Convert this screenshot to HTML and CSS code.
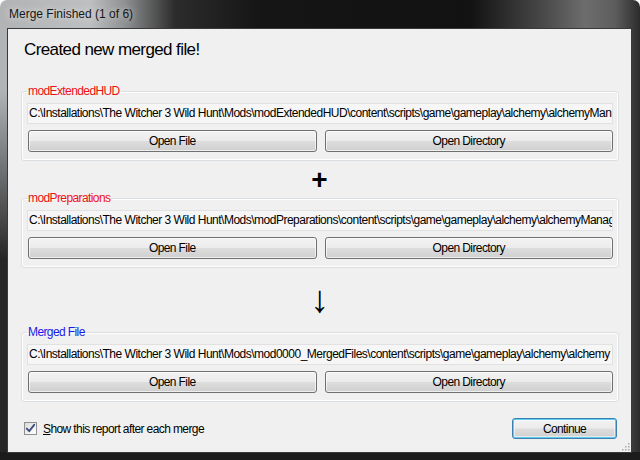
FILE: index.html
```html
<!DOCTYPE html>
<html>
<head>
<meta charset="utf-8">
<title>Merge Finished</title>
<link rel="stylesheet" href="styles.css">
</head>
<body>
<div class="window">
  <div class="titlebar">Merge Finished (1 of 6)</div>
  <div class="client">
    <h1 class="heading">Created new merged file!</h1>

    <fieldset class="group">
      <legend class="legend legend-red">modExtendedHUD</legend>
      <div class="path">C:\Installations\The Witcher 3 Wild Hunt\Mods\modExtendedHUD\content\scripts\game\gameplay\alchemy\alchemyMan</div>
      <div class="btnrow">
        <button class="btn">Open File</button>
        <button class="btn">Open Directory</button>
      </div>
    </fieldset>

    <div class="sep sep-plus">+</div>

    <fieldset class="group">
      <legend class="legend legend-red">modPreparations</legend>
      <div class="path">C:\Installations\The Witcher 3 Wild Hunt\Mods\modPreparations\content\scripts\game\gameplay\alchemy\alchemyManag</div>
      <div class="btnrow">
        <button class="btn">Open File</button>
        <button class="btn">Open Directory</button>
      </div>
    </fieldset>

    <div class="sep sep-arrow">↓</div>

    <fieldset class="group">
      <legend class="legend legend-blue">Merged File</legend>
      <div class="path">C:\Installations\The Witcher 3 Wild Hunt\Mods\mod0000_MergedFiles\content\scripts\game\gameplay\alchemy\alchemy</div>
      <div class="btnrow">
        <button class="btn">Open File</button>
        <button class="btn">Open Directory</button>
      </div>
    </fieldset>

    <div class="footer">
      <label class="check">
        <span class="checkbox">
          <svg width="11" height="11" viewBox="0 0 11 11"><path d="M1.8 5.6 L4.2 8.2 L9.2 1.8" fill="none" stroke="#3d4f80" stroke-width="1.9" stroke-linejoin="round" stroke-linecap="round"/></svg>
        </span>
        <span class="check-text"><u>S</u>how this report after each merge</span>
      </label>
      <button class="btn btn-default">Continue</button>
    </div>

    <svg class="grip" width="9" height="9" viewBox="0 0 9 9">
      <rect x="7" y="1" width="1.5" height="1.5" fill="#a8a8a8"/>
      <rect x="4" y="4" width="1.5" height="1.5" fill="#a8a8a8"/>
      <rect x="7" y="4" width="1.5" height="1.5" fill="#a8a8a8"/>
      <rect x="1" y="7" width="1.5" height="1.5" fill="#a8a8a8"/>
      <rect x="4" y="7" width="1.5" height="1.5" fill="#a8a8a8"/>
      <rect x="7" y="7" width="1.5" height="1.5" fill="#a8a8a8"/>
    </svg>
  </div>
</div>
</body>
</html>
```

FILE: styles.css
```css
html, body {
  margin: 0;
  padding: 0;
  background: #ffffff;
}

body {
  font-family: "Liberation Sans", Arial, sans-serif;
  font-size: 12px;
  color: #000;
}

.window {
  width: 640px;
  height: 460px;
  box-sizing: border-box;
  display: flex;
  flex-direction: column;
  border-radius: 7px 7px 0 0;
  overflow: hidden;
  background:
    linear-gradient(#1c1c1c, #1c1c1c) left bottom / 100% 8px no-repeat,
    linear-gradient(to bottom, rgba(30,30,30,0) 0, rgba(30,30,30,0) 90px, rgba(30,30,30,0.95) 260px) left top / 8px 100% no-repeat,
    linear-gradient(to right, #b1b3b5 0, #bdbfc1 90px, #8f9092 125px, #2c2c2c 175px, #151515 260px, #121212 470px, #464646 540px, #6d6d6d 585px, #5d5d5d 615px, #2c2c2c 640px);
}

.titlebar {
  flex: none;
  height: 29px;
  line-height: 29px;
  padding-left: 9px;
  font-size: 12px;
  color: #161616;
  text-shadow: 0 0 6px rgba(255,255,255,0.75);
}

.client {
  position: relative;
  flex: 1;
  margin: 0 9px 8px 8px;
  background: #f0f0f0;
  box-shadow: 0 0 0 1px #3a3a3a;
  display: flex;
  flex-direction: column;
}

.heading {
  margin: 10px 0 0 16px;
  font-size: 17px;
  line-height: 22px;
  font-weight: normal;
  letter-spacing: -0.6px;
  color: #000;
}

.group {
  margin: 23px 12px 0 13px;
  padding: 5px 5px 8px 5px;
  border: 1px solid #dadfe3;
  border-radius: 3px;
  box-shadow: inset 0 0 0 1px #ffffff;
  min-width: 0;
}

.legend {
  padding: 0 1px;
  font-size: 12px;
  line-height: 14px;
  letter-spacing: -0.6px;
}

.legend-red { color: #ee1111; }
.legend-blue { color: #1a1ae6; }

.path {
  height: 19px;
  line-height: 19px;
  border: 1px solid #e1e1e1;
  background: #f6f6f6;
  padding-left: 1px;
  white-space: nowrap;
  overflow: hidden;
  font-size: 12px;
  letter-spacing: -0.5px;
  color: #000;
}

.btnrow {
  display: grid;
  grid-template-columns: 1fr 1fr;
  column-gap: 8px;
  margin-top: 6px;
  padding-left: 1px;
}

.btn {
  height: 22px;
  margin: 0;
  padding: 0;
  border: 1px solid #707070;
  border-radius: 3px;
  background: linear-gradient(#f3f3f3 0, #ebebeb 48%, #dddddd 52%, #cfcfcf 100%);
  box-shadow: inset 0 0 0 1px rgba(255,255,255,0.65);
  font-family: "Liberation Sans", Arial, sans-serif;
  font-size: 12px;
  letter-spacing: -0.6px;
  color: #000;
}

.sep {
  text-align: center;
  color: #000;
  font-family: "Liberation Sans", Arial, sans-serif;
}

.sep-plus {
  box-sizing: border-box;
  height: 30px;
  padding-top: 8px;
  line-height: 22px;
  font-size: 28px;
  font-weight: bold;
}

.sep-arrow {
  box-sizing: border-box;
  height: 57px;
  padding-top: 6px;
  line-height: 51px;
  font-size: 38px;
  font-weight: bold;
}

.group + .sep {
  margin-bottom: -23px;
}

.footer {
  display: flex;
  align-items: center;
  justify-content: space-between;
  margin: 16px 14px 0 16px;
}

.check {
  display: flex;
  align-items: center;
  gap: 6px;
}

.checkbox {
  width: 11px;
  height: 11px;
  border: 1px solid #8e8f8f;
  background: linear-gradient(135deg, #d9d9d9 0, #f4f4f4 60%, #ffffff 100%);
  display: flex;
  align-items: center;
  justify-content: center;
}

.check-text {
  font-size: 12px;
  letter-spacing: -0.6px;
}

.btn-default {
  width: 105px;
  height: 21px;
  border-color: #3c7fb1;
  box-shadow: inset 0 0 0 1px #5fcbef, inset 0 0 0 2px rgba(255,255,255,0.5);
}

.grip {
  position: absolute;
  right: 1px;
  bottom: 1px;
}
```
